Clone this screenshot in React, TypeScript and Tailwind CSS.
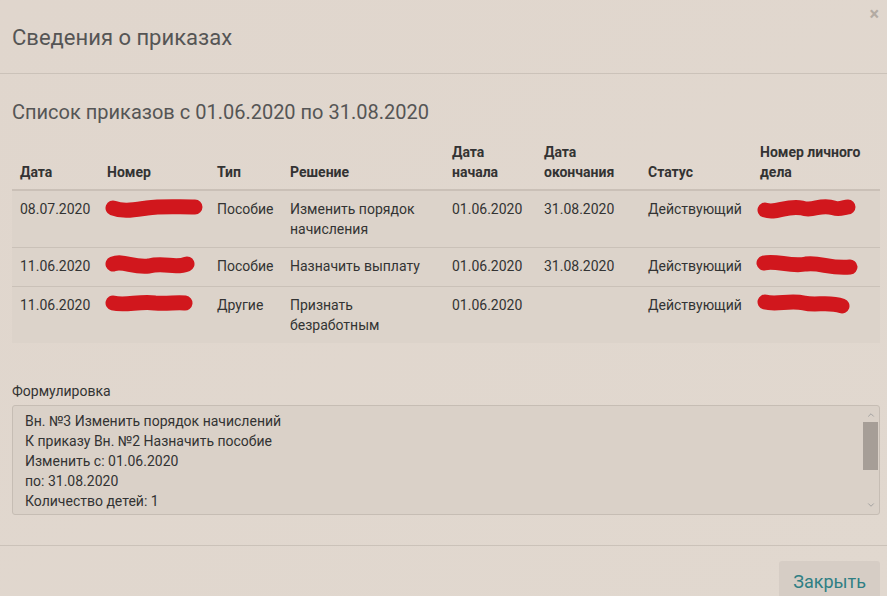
import { ChevronDown, ChevronUp } from "lucide-react";

const font = { fontFamily: "Roboto, 'Noto Sans', sans-serif" };

type Row = {
  date: string;
  type: string;
  decision: string[];
  start: string;
  end: string;
  status: string;
  num: string;
  personal: string;
};

// red marker strokes that hide the numbers
const scribbles = {
  a: "M8 11 C18 15 28 13 42 11 C56 9 70 10 90 10",
  b: "M8 10 C18 6 28 14 44 12 C60 8 70 15 82 10",
  c: "M8 10 C20 13 34 8 50 10 C62 11 72 9 80 10",
  d: "M9 13 C20 17 30 8 46 11 C58 15 64 6 78 11 C84 13 88 10 92 10",
  e: "M8 9 C20 6 34 13 50 10 C64 8 74 15 94 13",
  f: "M9 9 C20 12 34 7 48 10 C60 13 72 8 86 13",
};

const rows: Row[] = [
  { date: "08.07.2020", type: "Пособие", decision: ["Изменить порядок", "начисления"], start: "01.06.2020", end: "31.08.2020", status: "Действующий", num: scribbles.a, personal: scribbles.d },
  { date: "11.06.2020", type: "Пособие", decision: ["Назначить выплату"], start: "01.06.2020", end: "31.08.2020", status: "Действующий", num: scribbles.b, personal: scribbles.e },
  { date: "11.06.2020", type: "Другие", decision: ["Признать", "безработным"], start: "01.06.2020", end: "", status: "Действующий", num: scribbles.c, personal: scribbles.f },
];

function Scribble({ d, width }: { d: string; width: number }) {
  return (
    <svg width={width} height="24" viewBox={`0 0 ${width} 24`} className="block">
      <path d={d} fill="none" stroke="#d1171d" strokeWidth="15" strokeLinecap="round" strokeLinejoin="round" />
    </svg>
  );
}

export default function App() {
  return (
    <div className="w-[887px] h-[596px] overflow-hidden bg-gradient-to-br from-[#e0d6cd] to-[#e1d8cf] text-[#333]" style={font}>
      <div className="relative h-[74px] border-b border-[#cbc2b9] px-3 flex items-center">
        <h1 className="text-[22px] text-[#555] font-normal leading-none pt-[2px]">Сведения о приказах</h1>
        <span className="absolute right-[8px] top-[5px] text-[18px] font-bold text-[#b3aba3] leading-none">×</span>
      </div>

      <div className="px-3 pt-[26px]">
        <h2 className="text-[20px] text-[#555] leading-[24px]">Список приказов с 01.06.2020 по 31.08.2020</h2>

        <table className="mt-[18px] w-[868px] border-collapse text-[14px] leading-[20px] table-fixed">
          <colgroup>
            <col className="w-[87px]" />
            <col className="w-[110px]" />
            <col className="w-[73px]" />
            <col className="w-[162px]" />
            <col className="w-[92px]" />
            <col className="w-[104px]" />
            <col className="w-[112px]" />
            <col className="w-[128px]" />
          </colgroup>
          <thead>
            <tr className="border-b-2 border-[#cac0b7] text-left align-bottom font-bold text-[#333]">
              <th className="px-2 pt-0 pb-[7px]">Дата</th>
              <th className="px-2 pb-[7px]">Номер</th>
              <th className="px-2 pb-[7px]">Тип</th>
              <th className="px-2 pb-[7px]">Решение</th>
              <th className="px-2 pb-[7px]">Дата<br />начала</th>
              <th className="px-2 pb-[7px]">Дата<br />окончания</th>
              <th className="px-2 pb-[7px]">Статус</th>
              <th className="px-2 pb-[7px]">Номер личного<br />дела</th>
            </tr>
          </thead>
          <tbody>
            {rows.map((r, i) => (
              <tr key={i} className={`bg-[#dcd3ca] align-top ${i > 0 ? "border-t border-[#cac1b8]" : ""}`}>
                <td className="px-2 py-2">{r.date}</td>
                <td className="px-0 py-2"><div className="-mt-[2px] ml-[6px]"><Scribble d={r.num} width={100} /></div></td>
                <td className="px-2 py-2">{r.type}</td>
                <td className="px-2 py-2">{r.decision.map((l) => <div key={l}>{l}</div>)}</td>
                <td className="px-2 py-2">{r.start}</td>
                <td className="px-2 py-2">{r.end}</td>
                <td className="px-2 py-2">{r.status}</td>
                <td className="px-0 py-2"><div className="-mt-[2px] ml-[4px]"><Scribble d={r.personal} width={104} /></div></td>
              </tr>
            ))}
          </tbody>
        </table>

        <div className="mt-[38px] text-[14px] leading-[20px] text-[#333]">Формулировка</div>
        <div className="mt-[4px] h-[110px] w-[868px] rounded-[3px] border border-[#c6bdb4] bg-[#dad1c8] flex">
          <div className="flex-1 px-3 py-[5px] text-[14px] leading-[20px] text-[#333]">
            <div>Вн. №3 Изменить порядок начислений</div>
            <div>К приказу Вн. №2 Назначить пособие</div>
            <div>Изменить с: 01.06.2020</div>
            <div>по: 31.08.2020</div>
            <div>Количество детей: 1</div>
          </div>
          <div className="w-[17px] flex flex-col items-center">
            <ChevronUp size={10} className="text-[#999] mt-[4px]" />
            <div className="w-[15px] h-[48px] bg-[#a69e97] mt-[2px]" />
            <div className="flex-1" />
            <ChevronDown size={10} className="text-[#999] mb-[4px]" />
          </div>
        </div>
      </div>

      <div className="mt-[30px] border-t border-[#cbc2b9] flex justify-end px-[7px] pt-[15px]">
        <button className="h-[40px] px-[14px] rounded-[3px] bg-[#d6cdc5] text-[#2f7f84] text-[18px]">Закрыть</button>
      </div>
    </div>
  );
}
